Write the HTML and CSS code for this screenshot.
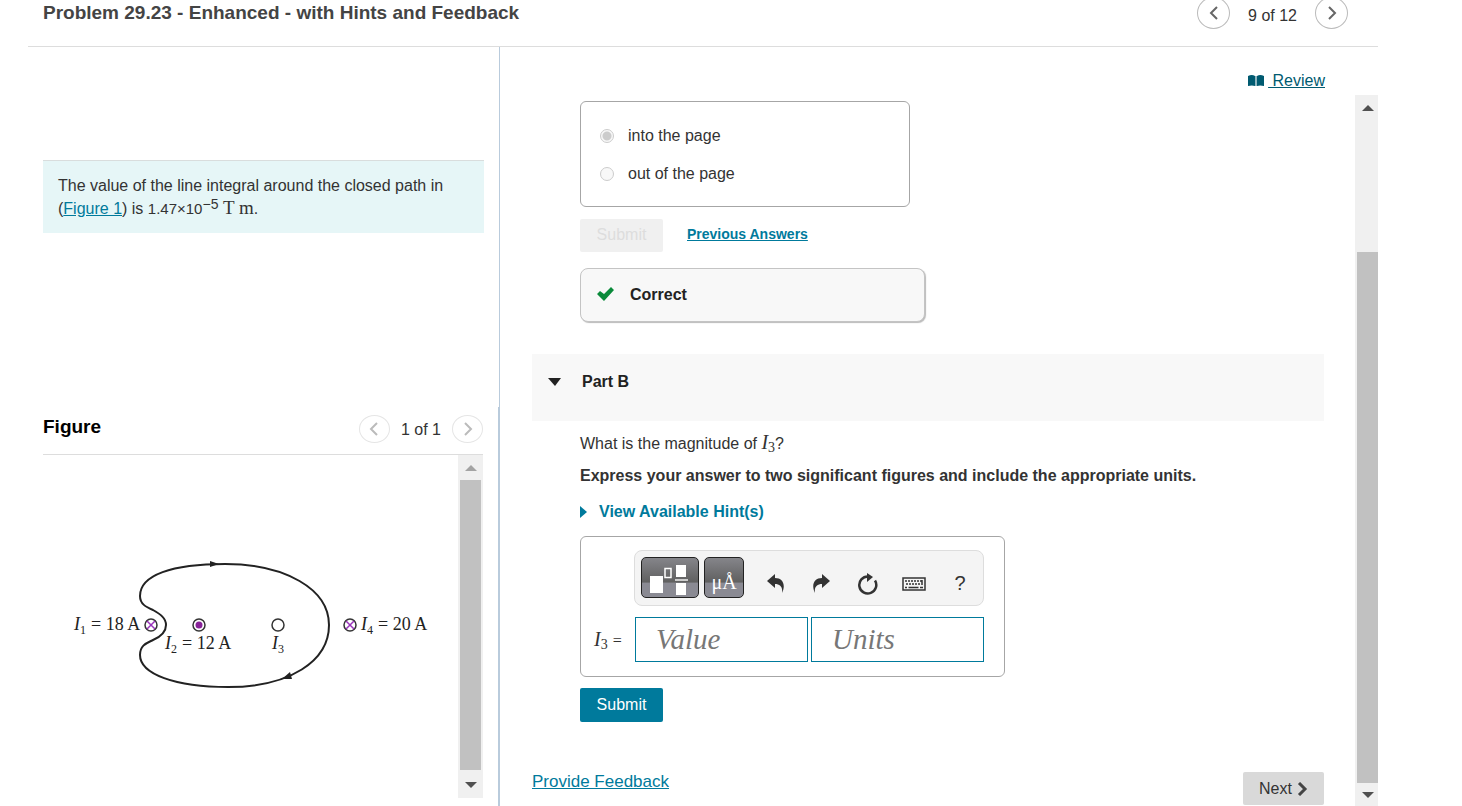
FILE: index.html
```html
<!DOCTYPE html>
<html lang="en">
<head>
<meta charset="utf-8">
<title>Problem 29.23</title>
<link rel="stylesheet" href="styles.css">
</head>
<body>
<div class="page">
  <header class="header">
    <h1 class="title">Problem 29.23 - Enhanced - with Hints and Feedback</h1>
    <nav class="pager">
      <button class="round" aria-label="Previous problem"><svg width="12" height="16" viewBox="0 0 12 16"><path d="M9 2 3 8l6 6"/></svg></button>
      <span>9 of 12</span>
      <button class="round" aria-label="Next problem"><svg width="12" height="16" viewBox="0 0 12 16"><path d="m3 2 6 6-6 6"/></svg></button>
    </nav>
  </header>
  <div class="columns">
    <aside class="side">
      <section class="intro">
        <p class="statement">The value of the line integral around the closed path in<br>(<a href="#figure">Figure 1</a>) is <span class="number">1.47×10<sup>−5</sup></span> <span class="unit">T m</span>.</p>
      </section>
      <section class="figure" id="figure">
        <div class="figure-head">
          <h2>Figure</h2>
          <nav class="pager pager-small">
            <button class="round" disabled aria-label="Previous figure"><svg width="12" height="16" viewBox="0 0 12 16"><path d="M9 2 3 8l6 6"/></svg></button>
            <span>1 of 1</span>
            <button class="round" disabled aria-label="Next figure"><svg width="12" height="16" viewBox="0 0 12 16"><path d="m3 2 6 6-6 6"/></svg></button>
          </nav>
        </div>
        <div class="figure-body">
          <svg class="diagram" width="415" height="343" viewBox="43 455 415 343" role="img" aria-label="Closed path around currents">
            <path class="loop" d="M225 564C285 564 329 589 329 625C329 661 290 687 228 687C175 687 140 674 140 655C140 645 147 643 153 640C160 637 166 633 166 625C166 618 160 614 153 610C146 607 140 604 140 596C140 575 172 564 225 564Z"/>
            <path class="head" d="m219 564-9-3v6zM282 679l8-7 2 7z"/>
            <g class="ring"><circle cx="151" cy="625" r="6"/><circle cx="199" cy="625" r="6"/><circle cx="278" cy="625" r="6"/><circle cx="350" cy="625" r="6"/></g>
            <path class="cross" d="m147 621 8 8m0-8-8 8M346 621l8 8m0-8-8 8"/>
            <circle class="dot" cx="199" cy="625" r="3.5"/>
            <g class="label">
              <text x="74" y="630"><tspan class="var">I</tspan><tspan class="sub" dy="4">1</tspan></text><text x="91" y="630">= 18 A</text>
              <text x="165" y="649"><tspan class="var">I</tspan><tspan class="sub" dy="4">2</tspan></text><text x="182" y="649">= 12 A</text>
              <text x="272" y="649"><tspan class="var">I</tspan><tspan class="sub" dy="4">3</tspan></text>
              <text x="361" y="630"><tspan class="var">I</tspan><tspan class="sub" dy="4">4</tspan></text><text x="378" y="630">= 20 A</text>
            </g>
          </svg>
          <div class="bar bar-figure">
            <svg class="tip faded" width="12" height="6" viewBox="0 0 12 6"><path d="M0 6 6 0l6 6z"/></svg>
            <div class="thumb"></div>
            <svg class="tip" width="12" height="6" viewBox="0 0 12 6"><path d="M0 0h12L6 6z"/></svg>
          </div>
        </div>
      </section>
    </aside>
    <main class="main">
      <div class="review">
        <a href="#review"><svg width="16" height="12" viewBox="0 0 16 12"><path d="M0 1Q4-1 7 1v10Q4 10 0 11zM9 1q3-2 7 0v10q-4-1-7 0z"/><path class="fold" d="M7 1h2v10H7z"/></svg>&nbsp;<span>&nbsp;Review</span></a>
      </div>
      <div class="scroller">
        <div class="content">
          <div class="indent">
            <div class="choices">
              <label><input type="radio" name="direction" checked disabled>into the page</label>
              <label><input type="radio" name="direction" disabled>out of the page</label>
            </div>
            <div class="actions">
              <button class="submit" disabled>Submit</button>
              <a class="previous" href="#answers">Previous Answers</a>
            </div>
            <div class="correct"><svg width="17" height="14" viewBox="0 0 17 14"><path d="m0 7 3-3 4 3 7-7 3 3L7 14z"/></svg>Correct</div>
          </div>
          <h2 class="part"><svg width="13" height="8" viewBox="0 0 13 8"><path d="M0 0h13L7 8z"/></svg>Part B</h2>
          <div class="indent">
            <p class="question">What is the magnitude of <span class="math"><i>I</i><sub>3</sub></span>?</p>
            <p class="directions">Express your answer to two significant figures and include the appropriate units.</p>
            <button class="hints"><svg width="7" height="12" viewBox="0 0 7 12"><path d="M0 0l7 6-7 6z"/></svg>View Available Hint(s)</button>
            <div class="answer">
              <div class="tools">
                <button class="tool-key wide" aria-label="Templates"><svg width="56" height="39" viewBox="0 0 56 39"><path fill="#fff" d="M8 18h13v17H8zM34 7h10v12H34zM34 25h10v12H34z"/><path fill="#ccc" d="M33 21h13v2H33z"/><path fill="none" stroke="#fff" stroke-width="1.500" d="M23 10.500h6v9h-6z"/></svg></button>
                <button class="tool-key units" aria-label="Symbols">μÅ</button>
                <div class="tool-group">
                  <button class="tool" aria-label="Undo"><svg width="18" height="19" viewBox="0 0 18 19"><path d="M0 7 8 0v4c8 0 11 7 7 15 1-6-2-9-7-9v4z"/></svg></button>
                  <button class="tool" aria-label="Redo"><svg width="18" height="19" viewBox="0 0 18 19"><path d="M17 7 9 0v4C1 4-2 11 2 19c-1-6 2-9 7-9v4z"/></svg></button>
                  <button class="tool" aria-label="Reset"><svg width="20" height="22" viewBox="0 0 20 22"><path fill="none" stroke="#333" stroke-width="2.500" d="M10 3.500a8.500 8.500 0 1 0 7 4"/><path d="m9 0 6 4-6 5z"/></svg></button>
                  <button class="tool" aria-label="Keyboard"><svg width="24" height="14" viewBox="0 0 24 14"><rect x="1" y="1" width="22" height="12" fill="none" stroke="#333" stroke-width="1.500"/><path fill="none" stroke="#333" stroke-width="1.500" stroke-dasharray="2 1" d="M3 4h17M4 7h15"/><path fill="none" stroke="#333" stroke-width="1.500" d="M3 10.500h2M6.500 10.500h10M18 10.500h3M20 3v5"/></svg></button>
                  <button class="tool help" aria-label="Help">?</button>
                </div>
              </div>
              <div class="fields">
                <label class="math" for="value"><i>I</i><sub>3</sub> <span class="equals">=</span></label>
                <input id="value" type="text" placeholder="Value">
                <input type="text" placeholder="Units" aria-label="Units">
              </div>
            </div>
            <button class="submit">Submit</button>
          </div>
          <footer class="footer">
            <a href="#feedback">Provide Feedback</a>
            <button class="next">Next<svg width="11" height="14" viewBox="0 0 11 14"><path d="m2 1 6 6-6 6"/></svg></button>
          </footer>
        </div>
        <div class="bar bar-main">
          <svg class="tip" width="12" height="6" viewBox="0 0 12 6"><path d="M0 6 6 0l6 6z"/></svg>
          <div class="thumb"></div>
          <svg class="tip" width="12" height="6" viewBox="0 0 12 6"><path d="M0 0h12L6 6z"/></svg>
        </div>
      </div>
    </main>
  </div>
</div>
</body>
</html>
```
FILE: styles.css
```css
* { box-sizing: border-box; }
body {
  margin: 0;
  background: #fff;
  color: #333;
  font: 16px/23px "Liberation Sans", Arial, sans-serif;
}
h1, h2, p { margin: 0; }
button, input { font: inherit; color: inherit; }
button { padding: 0; border: 0; background: none; }
svg { flex: none; display: block; }
a { color: #007a9c; }

.page {
  display: flex;
  flex-direction: column;
  height: 100vh;
  padding: 0 84px 0 28px;
  overflow: hidden;
}
.header {
  display: flex;
  justify-content: space-between;
  align-items: center;
  margin-top: -3px;
  padding: 0 30px 17px 15px;
  border-bottom: 1px solid #ddd;
}
.title { font-size: 19px; line-height: 24px; color: #444; }
.pager { display: flex; align-items: center; gap: 18px; }
.pager span { padding-top: 4px; }
.round {
  display: grid;
  place-items: center;
  width: 33px;
  height: 32px;
  border: 1px solid #bbb;
  border-radius: 50%;
}
.round path { fill: none; stroke: #666; stroke-width: 2; }
.pager-small { gap: 11px; }
.pager-small span { padding-top: 2px; }
.pager-small .round { width: 31px; height: 28px; border-color: #e5e5e5; }
.pager-small path { stroke: #bbb; }

.columns {
  flex: 1;
  display: grid;
  grid-template-columns: 472px 1fr;
  min-height: 0;
}
.side { display: flex; flex-direction: column; min-height: 0; }
.intro { padding: 113px 15px 174px; border-right: 1px solid #b9cbdc; }
.statement {
  padding: 13px 15px;
  background: #e6f6f7;
  border-top: 1px solid #d9dddd;
}
.number { font-size: 15px; }
sup { font-size: 14px; line-height: 0; vertical-align: 5px; }
.unit { font: 19px/20px "Liberation Serif", serif; }

.figure {
  flex: 1;
  display: flex;
  flex-direction: column;
  min-height: 0;
  padding: 0 15px 8px;
  border-right: 2px solid #b9cbdc;
}
.figure-head {
  display: flex;
  justify-content: space-between;
  align-items: center;
  height: 48px;
  padding-bottom: 4px;
  border-bottom: 1px solid #ddd;
}
.figure-head h2 { font-size: 19px; color: #000; padding-bottom: 4px; }
.figure-body { flex: 1; display: flex; justify-content: space-between; min-height: 0; }
.loop { fill: none; stroke: #222; stroke-width: 2; }
.head { fill: #222; }
.ring { fill: none; stroke: #333; stroke-width: 1.500; }
.cross { fill: none; stroke: #93b; stroke-width: 1.500; }
.dot { fill: #829; }
.label { font: 18px "Liberation Serif", serif; fill: #222; }
.var { font-style: italic; }
.sub { font-size: 12px; }

.bar {
  display: flex;
  flex-direction: column;
  align-items: center;
  background: #f0f0f0;
}
.thumb { flex: 1; align-self: stretch; background: #c1c1c1; }
.tip { fill: #505050; }
.faded { fill: #a3a3a3; }
.bar-figure { width: 25px; padding: 10px 2px; gap: 9px; }
.bar-figure .thumb { margin-bottom: 3px; }
.bar-main { flex: none; width: 23px; padding: 10px 0 8px 2px; gap: 9px; }
.bar-main .thumb { margin-top: 132px; }

.main { display: flex; flex-direction: column; min-width: 0; min-height: 0; }
.review { display: flex; justify-content: flex-end; padding: 22px 53px 3px 0; }
.review a { display: flex; align-items: center; color: #005a70; text-decoration: none; }
.review span { text-decoration: underline; }
.review svg { fill: #005a70; }
.review .fold { fill: #8fb5bf; }
.scroller { flex: 1; display: flex; min-height: 0; }
.content { flex: 1; min-width: 0; padding: 6px 31px 0 32px; }
.indent { padding-left: 48px; }
.choices {
  display: flex;
  flex-direction: column;
  gap: 15px;
  width: 330px;
  height: 106px;
  padding: 22px 19px;
  border: 1px solid #a6a6a6;
  border-radius: 6px;
}
.choices label { display: flex; align-items: center; gap: 14px; }
.choices input {
  appearance: none;
  width: 14px;
  height: 14px;
  margin: 0;
  border: 1px solid #ccc;
  border-radius: 50%;
  background: #f8f8f8;
}
.choices input:checked { background: radial-gradient(circle, #ccc 4px, #f8f8f8 5px); }
.actions { display: flex; gap: 24px; padding: 12px 0 16px; }
.submit {
  width: 83px;
  height: 34px;
  padding-bottom: 2px;
  border-radius: 2px;
  background: #007a9c;
  color: #fff;
}
.submit:disabled { height: 33px; background: #f0f0f0; color: #ddd; }
.previous { font-size: 14px; font-weight: bold; line-height: 31px; }
.correct {
  display: flex;
  align-items: center;
  gap: 16px;
  width: 345px;
  height: 54px;
  padding: 0 16px 2px;
  border: 1px solid #c4c4c4;
  border-radius: 8px;
  box-shadow: 1px 1px 1px #bbb;
  background: #f8f8f8;
  color: #222;
  font-weight: bold;
}
.correct svg { fill: #0a8a3a; }
.part {
  display: flex;
  align-items: center;
  gap: 21px;
  height: 67px;
  margin-top: 32px;
  padding: 0 16px 12px;
  background: #f8f8f8;
  color: #222;
  font-size: 16px;
}
.part svg { fill: #222; }
.question { padding-top: 11px; }
.math { font-family: "Liberation Serif", serif; font-size: 20px; line-height: 20px; white-space: nowrap; }
.equals { font-size: 16px; }
sub { font-size: 14px; line-height: 0; vertical-align: -3px; }
.directions { padding-top: 9px; font-weight: bold; }
.hints {
  display: flex;
  align-items: center;
  gap: 12px;
  margin: 13px 0;
  color: #007a9c;
  font-weight: bold;
}
.hints svg { fill: #007a9c; }
.answer {
  width: 425px;
  height: 141px;
  margin-bottom: 11px;
  padding: 13px 20px 0 13px;
  border: 1px solid #a6a6a6;
  border-radius: 6px;
}
.tools {
  display: flex;
  gap: 5px;
  height: 56px;
  margin: 0 0 11px 40px;
  padding: 6px 0 6px 6px;
  border: 1px solid #ddd;
  border-radius: 8px;
  background: #f4f4f4;
}
.tool-key {
  flex: none;
  width: 40px;
  height: 41px;
  border: 1px solid #222;
  border-radius: 5px;
  background: linear-gradient(#85858a, #606060 62%, #8a8a93 64%, #8a8a93);
}
.wide { width: 58px; }
.units { padding-top: 9px; color: #fff; font: 20px "Liberation Serif", serif; }
.tool-group { display: flex; padding: 9px 0 0 4px; }
.tool { display: grid; place-items: center; width: 46px; height: 35px; fill: #333; }
.help { font-size: 20px; }
.fields { display: flex; align-items: center; gap: 3px; }
.fields label { flex: 1; }
.fields input {
  width: 173px;
  height: 45px;
  padding: 0 20px;
  border: 1px solid #007a9c;
  border-radius: 0;
  font: italic 29px "Liberation Serif", serif;
}
.fields input::placeholder { color: #777; opacity: 1; }
.footer { display: flex; justify-content: space-between; padding-top: 48px; }
.footer a { font-size: 17px; }
.next {
  display: flex;
  align-items: center;
  justify-content: center;
  gap: 5px;
  width: 81px;
  height: 33px;
  margin-top: 2px;
  border-radius: 2px;
  background: #d9d9d9;
}
.next path { fill: none; stroke: #444; stroke-width: 3; }
```
